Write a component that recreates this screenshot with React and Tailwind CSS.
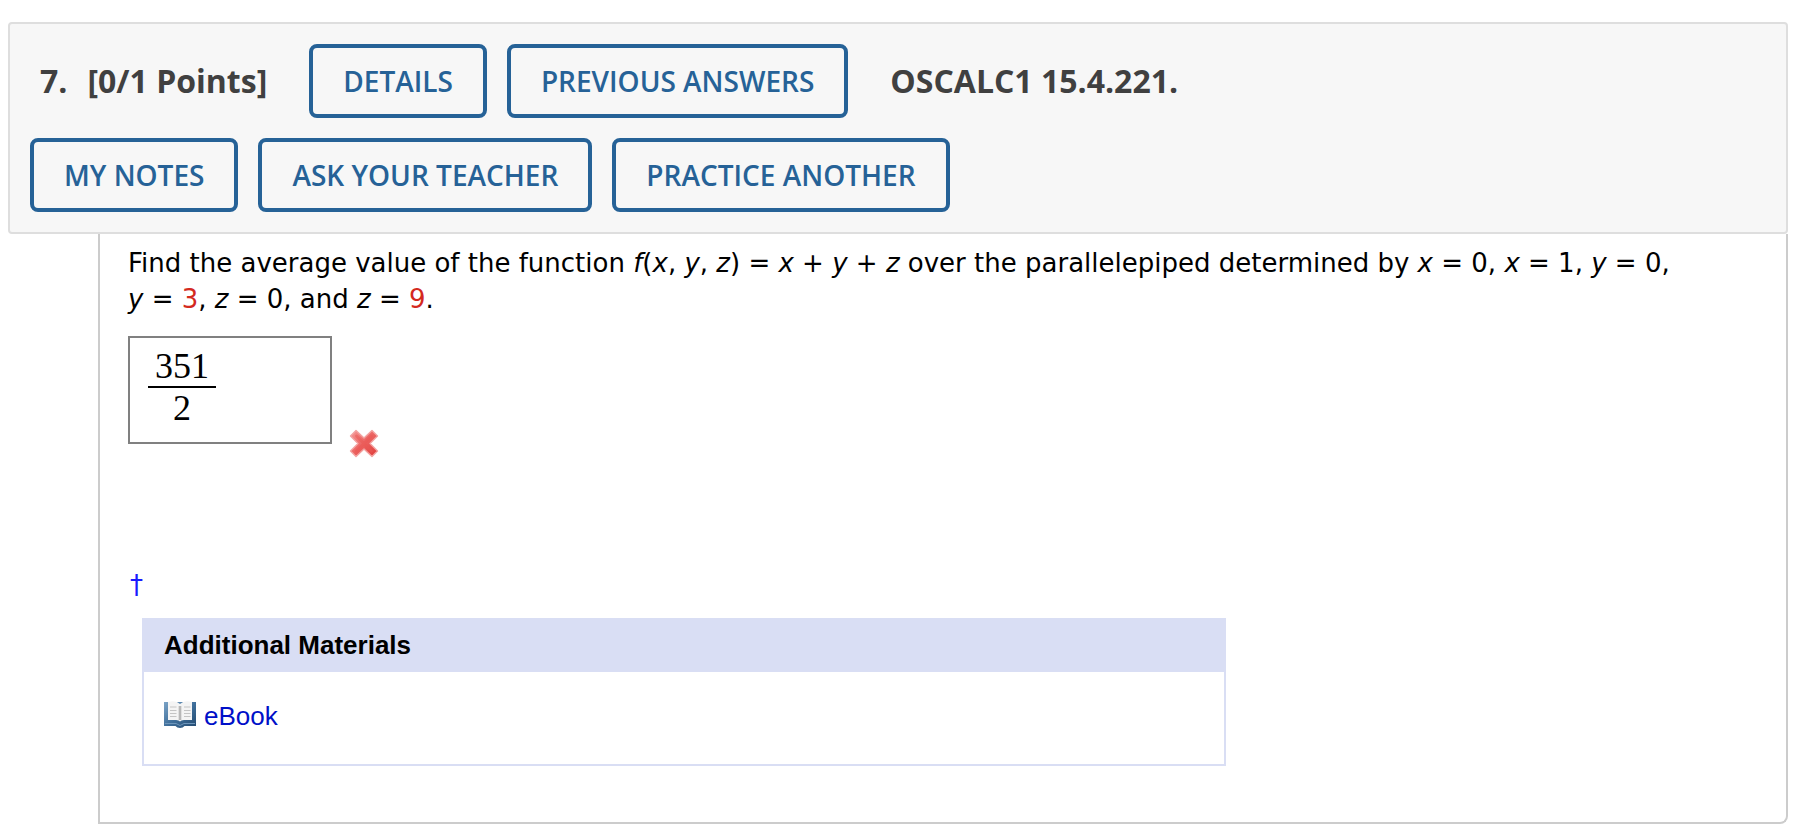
function ActionButton({ children }) {
  return (
    <button
      type="button"
      className="h-[74px] cursor-pointer rounded-lg border-4 border-[#266297] px-[30px] text-[28px] leading-9 font-semibold whitespace-nowrap text-[#266297]"
    >
      {children}
    </button>
  );
}

function WrongMark() {
  return (
    <svg viewBox="0 0 30 30" className="size-[30px]" role="img" aria-label="Incorrect">
      <defs>
        <linearGradient id="wrong" x1="0" y1="0" x2="1" y2="1">
          <stop offset="0" stopColor="#f59a98" />
          <stop offset="0.5" stopColor="#ec6361" />
          <stop offset="1" stopColor="#df3a37" />
        </linearGradient>
      </defs>
      <path
        d="M7 1.500 15 9 23 1.500 28.500 7 21 14.500 28.500 22 23 27.500 15 20 7 27.500 1.500 22 9 14.500 1.500 7Z"
        fill="url(#wrong)"
        stroke="#f3a3a1"
        strokeWidth="1.4"
        strokeLinejoin="round"
      />
      <path d="M7.500 7 22.500 22M22.500 7 7.500 22" stroke="#ea5552" strokeOpacity="0.5" strokeWidth="3" strokeLinecap="round" />
    </svg>
  );
}

function BookIcon() {
  return (
    <svg viewBox="0 0 32 28" className="mb-1 h-7 w-8" aria-hidden="true">
      <defs>
        <linearGradient id="cover" x1="0" y1="0" x2="1" y2="1">
          <stop offset="0" stopColor="#7ba3c6" />
          <stop offset="0.5" stopColor="#3f6f9b" />
          <stop offset="1" stopColor="#234a70" />
        </linearGradient>
        <linearGradient id="spine" x1="0" y1="0" x2="1" y2="0">
          <stop offset="0" stopColor="#f4f4f4" />
          <stop offset="0.5" stopColor="#a3a3a3" />
          <stop offset="1" stopColor="#f4f4f4" />
        </linearGradient>
      </defs>
      <path d="M0 2H32V26H20.500Q19 28 16 28T11.500 26H0Z" fill="url(#cover)" />
      <path d="M1 23.500H12L16 25.500 20 23.500H31" fill="none" stroke="#6d95ba" strokeWidth="1" />
      <path d="M4 2Q12 0 16 4 20 0 28 2V20H20Q17 20 16 21.500 15 20 12 20H4Z" fill="#f4f4f4" />
      <rect x="14" y="6" width="4" height="14" fill="url(#spine)" />
      <path
        d="M6 7H12.500M6 10.500H12.500M6 13.500H12.500M6 16.500H12.500M20 7H26.500M20 10.500H26.500M20 13.500H26.500M20 16.500H26.500"
        stroke="#c4c4c4"
        strokeWidth="1.2"
      />
    </svg>
  );
}

export default function App() {
  return (
    <main className="pt-[22px] pr-[10px] pb-3 pl-2">
      <header className="flex flex-col gap-5 rounded border-2 border-[#dedede] bg-[#f7f7f7] p-5 font-['Open_Sans',sans-serif]">
        <div className="flex flex-wrap items-center">
          <h2 className="mr-[42px] ml-[10px] flex items-baseline gap-5 text-[32px] leading-10 font-bold whitespace-nowrap text-[#404040]">
            <span>7.</span>
            <span>[0/1 Points]</span>
          </h2>
          <div className="flex gap-5">
            <ActionButton>DETAILS</ActionButton>
            <ActionButton>PREVIOUS ANSWERS</ActionButton>
          </div>
          <span className="ml-[42px] text-[32px] leading-10 font-bold text-[#404040]">OSCALC1 15.4.221.</span>
        </div>
        <div className="flex flex-wrap gap-5">
          <ActionButton>MY NOTES</ActionButton>
          <ActionButton>ASK YOUR TEACHER</ActionButton>
          <ActionButton>PRACTICE ANOTHER</ActionButton>
        </div>
      </header>

      <section className="ml-[90px] rounded-br-lg border-2 border-t-0 border-[#ccc] pt-[11px] pr-16 pb-14 pl-7 font-['DejaVu_Sans',sans-serif] text-[26px] leading-9 text-black">
        <p>
          Find the average value of the function{" "}
          <span className="whitespace-nowrap">
            <i>f</i>(<i>x</i>, <i>y</i>, <i>z</i>) = <i>x</i> + <i>y</i> + <i>z</i>
          </span>{" "}
          over the parallelepiped determined by{" "}
          <span className="whitespace-nowrap"><i>x</i> = 0</span>,{" "}
          <span className="whitespace-nowrap"><i>x</i> = 1</span>,{" "}
          <span className="whitespace-nowrap"><i>y</i> = 0</span>,{" "}
          <span className="whitespace-nowrap"><i>y</i> = <span className="text-[#d42a1e]">3</span></span>,{" "}
          <span className="whitespace-nowrap"><i>z</i> = 0</span>, and{" "}
          <span className="whitespace-nowrap"><i>z</i> = <span className="text-[#d42a1e]">9</span></span>.
        </p>

        <div className="mt-[19px] flex items-end gap-[17px]">
          <div
            role="math"
            aria-label="351 over 2"
            className="mb-[15px] flex h-[108px] w-[204px] items-start border-2 border-[#808080] px-[18px] pt-2"
          >
            <span className="flex flex-col items-center font-['Liberation_Serif',serif] text-[36px] leading-10">
              <span className="border-b-2 border-black px-[7px]">351</span>
              <span>2</span>
            </span>
          </div>
          <WrongMark />
        </div>

        <a href="#footnote" className="mt-[108px] ml-[2px] block w-fit text-[#1a1aff]">†</a>

        <table className="mt-[15px] ml-[14px] w-[1084px] max-w-full border-collapse border-2 border-[#d9def4] text-left font-['Liberation_Sans',sans-serif]">
          <thead>
            <tr>
              <th scope="col" className="bg-[#d9def4] px-5 pt-[7px] pb-[9px] font-bold">Additional Materials</th>
            </tr>
          </thead>
          <tbody>
            <tr>
              <td className="px-5 pt-[26px] pb-[30px]">
                <a href="#ebook" className="flex w-fit items-center gap-2 text-[#0010c8]">
                  <BookIcon />
                  eBook
                </a>
              </td>
            </tr>
          </tbody>
        </table>
      </section>
    </main>
  );
}
